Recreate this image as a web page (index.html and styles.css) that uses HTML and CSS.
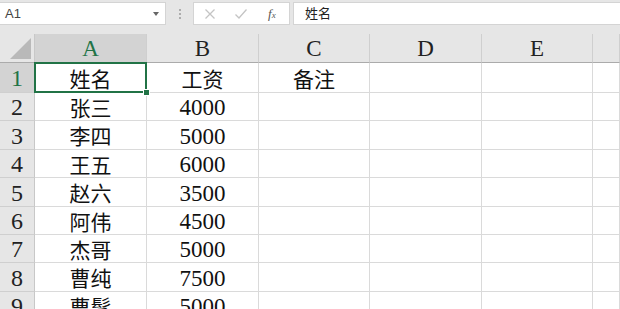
FILE: index.html
```html
<!DOCTYPE html>
<html lang="zh-CN">
<head>
    <meta charset="utf-8">
    <title>工作表</title>
    <link rel="stylesheet" href="styles.css">
</head>
<body>

    <!-- Formula bar -->
    <div class="formula-bar">
        <div class="name-box">
            <span>A1</span>
            <span class="drop-arrow"></span>
        </div>
        <div class="grip">
            <svg width="4" height="12" viewBox="0 0 4 12">
                <circle cx="2" cy="2" r="1" fill="#9a9a9a"/>
                <circle cx="2" cy="6" r="1" fill="#9a9a9a"/>
                <circle cx="2" cy="10" r="1" fill="#9a9a9a"/>
            </svg>
        </div>
        <div class="fx-buttons">
            <svg class="fx-icon" width="12" height="12" viewBox="0 0 12 12">
                <path d="M1.5 1.5 L10.5 10.5 M10.5 1.5 L1.5 10.5" stroke="#c4c4c4" stroke-width="1.3" fill="none"/>
            </svg>
            <svg class="fx-icon" width="14" height="12" viewBox="0 0 14 12">
                <path d="M1.5 6.5 L5 10 L12.5 1.5" stroke="#c4c4c4" stroke-width="1.3" fill="none"/>
            </svg>
            <span class="fx-label"><i>f</i><small>x</small></span>
        </div>
        <div class="formula-input">姓名</div>
    </div>

    <!-- Sheet grid -->
    <div class="sheet">
        <div class="corner"><span class="corner-tri"></span></div>
        <div class="col-head selected">A</div>
        <div class="col-head">B</div>
        <div class="col-head">C</div>
        <div class="col-head">D</div>
        <div class="col-head">E</div>
        <div class="col-head"></div>

        <div class="row-head selected">1</div>
        <div class="cell active">姓名</div>
        <div class="cell">工资</div>
        <div class="cell">备注</div>
        <div class="cell"></div>
        <div class="cell"></div>
        <div class="cell"></div>

        <div class="row-head">2</div>
        <div class="cell">张三</div>
        <div class="cell num">4000</div>
        <div class="cell"></div>
        <div class="cell"></div>
        <div class="cell"></div>
        <div class="cell"></div>

        <div class="row-head">3</div>
        <div class="cell">李四</div>
        <div class="cell num">5000</div>
        <div class="cell"></div>
        <div class="cell"></div>
        <div class="cell"></div>
        <div class="cell"></div>

        <div class="row-head">4</div>
        <div class="cell">王五</div>
        <div class="cell num">6000</div>
        <div class="cell"></div>
        <div class="cell"></div>
        <div class="cell"></div>
        <div class="cell"></div>

        <div class="row-head">5</div>
        <div class="cell">赵六</div>
        <div class="cell num">3500</div>
        <div class="cell"></div>
        <div class="cell"></div>
        <div class="cell"></div>
        <div class="cell"></div>

        <div class="row-head">6</div>
        <div class="cell">阿伟</div>
        <div class="cell num">4500</div>
        <div class="cell"></div>
        <div class="cell"></div>
        <div class="cell"></div>
        <div class="cell"></div>

        <div class="row-head">7</div>
        <div class="cell">杰哥</div>
        <div class="cell num">5000</div>
        <div class="cell"></div>
        <div class="cell"></div>
        <div class="cell"></div>
        <div class="cell"></div>

        <div class="row-head">8</div>
        <div class="cell">曹纯</div>
        <div class="cell num">7500</div>
        <div class="cell"></div>
        <div class="cell"></div>
        <div class="cell"></div>
        <div class="cell"></div>

        <div class="row-head">9</div>
        <div class="cell">曹髦</div>
        <div class="cell num">5000</div>
        <div class="cell"></div>
        <div class="cell"></div>
        <div class="cell"></div>
        <div class="cell"></div>
    </div>

</body>
</html>
```

FILE: styles.css
```css
body {
    margin: 0;
    background: #e6e6e6;
    font-family: "Liberation Sans", "Noto Sans CJK SC", sans-serif;
    overflow: hidden;
    height: 309px;
}

/* Formula bar */
.formula-bar {
    display: flex;
    height: 34px;
    padding-top: 2px;
    box-sizing: border-box;
}

.name-box,
.fx-buttons,
.formula-input {
    height: 23px;
    background: #fff;
    border: 1px solid #d4d4d4;
    box-sizing: border-box;
}

.name-box {
    width: 166px;
    border-left: none;
    display: flex;
    align-items: center;
    justify-content: space-between;
    padding: 0 5px 0 5px;
    font-size: 13px;
    color: #444;
}

.drop-arrow {
    width: 0;
    height: 0;
    border-left: 3.5px solid transparent;
    border-right: 3.5px solid transparent;
    border-top: 4px solid #666;
    margin-right: 1px;
}

.grip {
    width: 27px;
    display: flex;
    align-items: center;
    justify-content: center;
    height: 23px;
}

.fx-buttons {
    width: 97px;
    display: flex;
    align-items: center;
    padding-left: 10px;
    gap: 18px;
}

.fx-label {
    font-family: "Liberation Serif", serif;
    font-size: 13px;
    color: #555;
    margin-left: 2px;
}

.fx-label small {
    font-size: 9px;
    font-style: italic;
}

.formula-input {
    flex: 1;
    margin-left: 3px;
    border-right: none;
    padding-left: 11px;
    font-size: 13px;
    line-height: 21px;
    color: #222;
}

/* Sheet grid */
.sheet {
    display: grid;
    grid-template-columns: 35px 112px 112px 111px 112px 111px 1fr;
    grid-template-rows: 29px 30px 28px 29px 28px 29px 28px 28px 29px 28px;
}

.corner {
    background: #e6e6e6;
    border-right: 1px solid #c8c8c8;
    border-bottom: 1px solid #ababab;
    position: relative;
}

.corner-tri {
    position: absolute;
    right: 3px;
    bottom: 3px;
    width: 0;
    height: 0;
    border-left: 21px solid transparent;
    border-bottom: 21px solid #b9b9b9;
}

.col-head {
    background: #e6e6e6;
    border-right: 1px solid #cfcfcf;
    border-bottom: 1px solid #ababab;
    display: flex;
    align-items: center;
    justify-content: center;
    padding-top: 2px;
    font-family: "Liberation Serif", serif;
    font-size: 23px;
    color: #222;
}

.col-head.selected {
    background: #d3d3d3;
    color: #217346;
}

.row-head {
    background: #e6e6e6;
    border-right: 1px solid #c8c8c8;
    border-bottom: 1px solid #cfcfcf;
    display: flex;
    align-items: center;
    justify-content: center;
    padding-top: 2px;
    font-family: "Liberation Serif", serif;
    font-size: 24px;
    color: #222;
}

.row-head.selected {
    background: #d3d3d3;
    color: #217346;
}

.cell {
    background: #fff;
    border-right: 1px solid #dadada;
    border-bottom: 1px solid #dadada;
    display: flex;
    align-items: center;
    justify-content: center;
    font-family: "Liberation Serif", "Noto Sans CJK SC", serif;
    font-size: 21px;
    color: #111;
}

.cell.num {
    font-size: 23px;
    padding-top: 3px;
}

/* Active cell outline */
.cell.active {
    position: relative;
}

.cell.active::after {
    content: "";
    position: absolute;
    left: -1px;
    top: -1px;
    right: -1px;
    bottom: -1px;
    border: 2px solid #217346;
}

.cell.active::before {
    content: "";
    position: absolute;
    right: -4px;
    bottom: -4px;
    width: 5px;
    height: 5px;
    background: #217346;
    border: 1px solid #fff;
    z-index: 1;
}
```
